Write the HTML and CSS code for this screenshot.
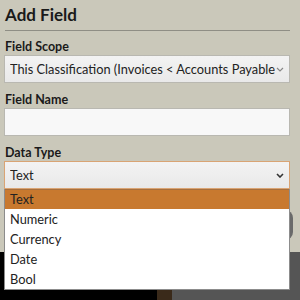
FILE: index.html
```html
<!DOCTYPE html>
<html lang="en">
<head>
    <meta charset="UTF-8">
    <title>Add Field</title>
    <link rel="stylesheet" href="styles.css">
</head>
<body>
    <div class="dialog">
        <h1>Add Field</h1>
        <hr class="rule">

        <div class="field">
            <label>Field Scope</label>
            <div class="select">
                <span class="select-text">This Classification (Invoices &lt; Accounts Payable</span>
                <svg class="chevron light" width="8" height="5" viewBox="0 0 8 5"><path d="M1 1 L4 4 L7 1" fill="none" stroke="currentColor" stroke-width="1.2"/></svg>
            </div>
        </div>

        <div class="field">
            <label>Field Name</label>
            <div class="input"></div>
        </div>

        <div class="field">
            <label>Data Type</label>
            <div class="select focused">
                <span class="select-text">Text</span>
                <svg class="chevron" width="8" height="5" viewBox="0 0 8 5"><path d="M1 1 L4 4 L7 1" fill="none" stroke="currentColor" stroke-width="1.6"/></svg>
                <ul class="options">
                    <li class="selected">Text</li>
                    <li>Numeric</li>
                    <li>Currency</li>
                    <li>Date</li>
                    <li>Bool</li>
                </ul>
            </div>
        </div>

        <div class="actions">
            <span class="button"></span>
        </div>
    </div>

    <div class="footer">
        <div class="footer-dark"></div>
        <div class="footer-thumb"></div>
        <div class="footer-grey"></div>
    </div>
</body>
</html>
```

FILE: styles.css
```css
body, html {
    margin: 0;
    padding: 0;
    width: 300px;
    height: 300px;
    overflow: hidden;
    font-family: 'Lato', sans-serif;
    color: #222;
}

.dialog {
    background-color: #cac8ba;
    height: 252px;
    padding: 0 10px 0 4px;
    box-sizing: border-box;
}

h1 {
    margin: 0;
    padding: 4px 0 0 1px;
    font-size: 17px;
    line-height: 22px;
    font-weight: bold;
    color: #1a1a1a;
}

.rule {
    margin: 4px 0 0 1px;
    border: none;
    border-top: 1px solid #8f8e85;
    height: 0;
}

.field label {
    display: block;
    font-size: 12.5px;
    font-weight: bold;
    line-height: 16px;
    padding: 8px 0 0 1px;
    color: #1a1a1a;
}

.field + .field label {
    padding-top: 9px;
}

.select, .input {
    position: relative;
    height: 28px;
    box-sizing: border-box;
    border: 1px solid #b9b8b1;
}

.select {
    display: flex;
    align-items: center;
    justify-content: space-between;
    padding: 0 5px 0 5px;
    background: linear-gradient(#f3f3f3, #e9e9e9);
}

.select-text {
    font-size: 12.8px;
    white-space: nowrap;
    overflow: hidden;
    color: #222;
}

.chevron {
    flex-shrink: 0;
    color: #333;
}

.chevron.light {
    color: #888;
}

.input {
    background-color: #f8f8f8;
}

.select.focused {
    border-color: #d9a474;
}

.options {
    position: absolute;
    top: 27px;
    left: -1px;
    right: -1px;
    margin: 0;
    padding: 0;
    list-style: none;
    background-color: #fff;
    border: 1px solid #8c8c8c;
    border-top: none;
    z-index: 2;
}

.options li {
    font-size: 12.8px;
    line-height: 20px;
    height: 20px;
    padding-left: 5px;
    color: #222;
}

.options li.selected {
    background-color: #c8792f;
    border-top: 1px solid #a8703d;
    height: 19px;
    line-height: 19px;
}

.actions {
    display: flex;
    justify-content: flex-end;
    margin: 21px -3px 0 0;
}

.button {
    width: 60px;
    height: 30px;
    border-radius: 8px;
    background-color: #6a6a6a;
}

.footer {
    display: flex;
    height: 48px;
}

.footer-dark {
    width: 157px;
    background-color: #000;
}

.footer-thumb {
    width: 15px;
    background-color: #3a2a1a;
}

.footer-grey {
    flex: 1;
    background-color: #555;
}
```
